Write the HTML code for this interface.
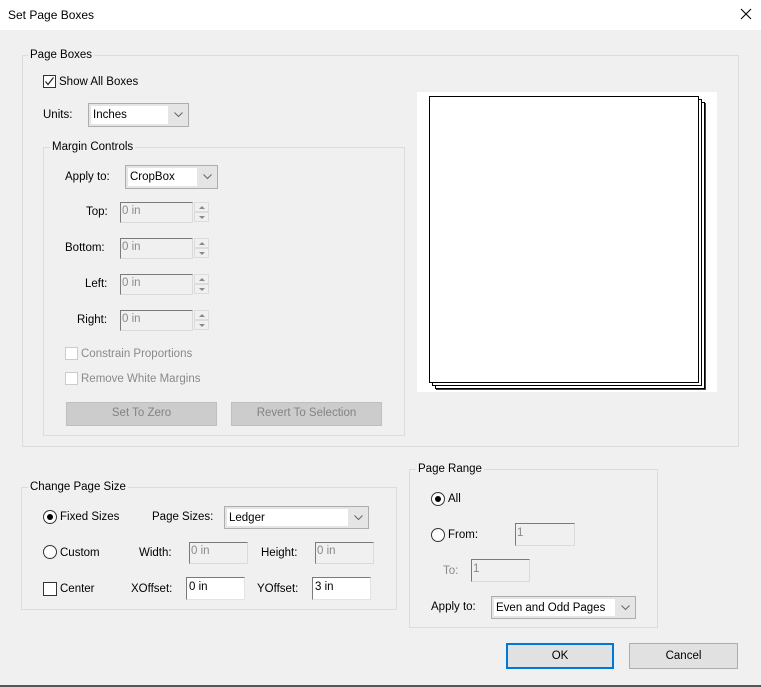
<!DOCTYPE html>
<html><head><meta charset="utf-8"><style>
*{box-sizing:border-box;margin:0;padding:0}
body{width:761px;height:687px;background:#f0f0f0;font-family:"Liberation Sans",sans-serif;font-size:11.5px;color:#000;position:relative;overflow:hidden}
.a{position:absolute}
.t{position:absolute;line-height:14px;white-space:nowrap}
.g{position:absolute;border:1px solid #dcdcdc}
.lg{position:absolute;background:#f0f0f0;padding:0 2px;line-height:14px;white-space:nowrap}
.sel{position:absolute;border:1px solid #adadad;background:#e5e5e5}
.sel .in{position:absolute;left:2px;top:2px;bottom:2px;right:20px;background:#fff;padding-left:2px;line-height:18px}
.sel svg{position:absolute;right:5px;top:8px}
.inp{position:absolute;border:1px solid #dadada;border-top-color:#7a7a7a;border-left-color:#7a7a7a;background:#f0f0f0;color:#8a8a8a;padding-left:1px;line-height:17px}
.inpw{position:absolute;border:1px solid #7a7a7a;border-right-color:#e3e3e3;border-bottom-color:#e3e3e3;background:#fff;padding-left:2px;line-height:19px}
.sp{position:absolute;width:15px;height:10px;border:1px solid #dcdcdc;background:#f0f0f0}
.sp:after{content:"";position:absolute;left:4px;top:3px;border-left:3px solid transparent;border-right:3px solid transparent}
.up:after{border-bottom:3px solid #8a8a8a}
.dn:after{border-top:3px solid #8a8a8a}
.cb{position:absolute;width:13px;height:13px;border:1px solid #333;background:#fff}
.cbd{border-color:#ccc}
.rd{position:absolute;width:14px;height:14px;border:1px solid #333;border-radius:50%;background:#fff}
.rd.on:after{content:"";position:absolute;left:3px;top:3px;width:6px;height:6px;border-radius:50%;background:#000}
.btn{position:absolute;background:#cccccc;border:1px solid #bfbfbf;color:#838383;text-align:center;line-height:21px}
.dis{color:#8a8a8a}
</style></head><body>
<div class="a" style="left:0;top:0;width:761px;height:30px;background:#fff"></div>
<div class="t" style="left:8px;top:8px;font-size:12px">Set Page Boxes</div>
<svg class="a" style="left:740px;top:8px" width="12" height="12"><path d="M1 1L11 11M11 1L1 11" stroke="#000" stroke-width="1.1"/></svg>

<div class="g" style="left:22px;top:55px;width:717px;height:392px"></div>
<div class="lg" style="left:28px;top:48px">Page Boxes</div>
<div class="cb" style="left:43px;top:75px"></div>
<svg class="a" style="left:44px;top:76px" width="11" height="11"><path d="M1.5 5.5L4 8.5L9.5 1.5" stroke="#222" stroke-width="1.2" fill="none"/></svg>
<div class="t" style="left:59px;top:75px">Show All Boxes</div>
<div class="t" style="left:43px;top:108px">Units:</div>
<div class="sel" style="left:88px;top:103px;width:101px;height:24px"><div class="in">Inches</div><svg width="9" height="6"><path d="M.5 .5L4.5 4.5L8.5 .5" stroke="#666" fill="none"/></svg></div>

<div class="a" style="left:417px;top:92px;width:300px;height:300px;background:#fff"></div>
<div class="a" style="left:435px;top:102px;width:270px;height:287px;border:1px solid #000;background:#fff;box-shadow:1px 1px 0 #444"></div>
<div class="a" style="left:432px;top:99px;width:270px;height:287px;border:1px solid #000;background:#fff"></div>
<div class="a" style="left:429px;top:96px;width:270px;height:287px;border:1px solid #000;background:#fff"></div>

<div class="g" style="left:43px;top:147px;width:362px;height:289px"></div>
<div class="lg" style="left:50px;top:140px">Margin Controls</div>
<div class="t" style="left:65px;top:170px">Apply to:</div>
<div class="sel" style="left:125px;top:165px;width:93px;height:24px"><div class="in">CropBox</div><svg width="9" height="6"><path d="M.5 .5L4.5 4.5L8.5 .5" stroke="#666" fill="none"/></svg></div>

<div class="t" style="left:86px;top:205px">Top:</div>
<div class="inp" style="left:120px;top:202px;width:73px;height:21px">0 in</div>
<div class="sp up" style="left:194px;top:202px"></div><div class="sp dn" style="left:194px;top:212px"></div>
<div class="t" style="left:65px;top:241px">Bottom:</div>
<div class="inp" style="left:120px;top:238px;width:73px;height:21px">0 in</div>
<div class="sp up" style="left:194px;top:238px"></div><div class="sp dn" style="left:194px;top:248px"></div>
<div class="t" style="left:85px;top:277px">Left:</div>
<div class="inp" style="left:120px;top:274px;width:73px;height:21px">0 in</div>
<div class="sp up" style="left:194px;top:274px"></div><div class="sp dn" style="left:194px;top:284px"></div>
<div class="t" style="left:77px;top:313px">Right:</div>
<div class="inp" style="left:120px;top:310px;width:73px;height:21px">0 in</div>
<div class="sp up" style="left:194px;top:310px"></div><div class="sp dn" style="left:194px;top:320px"></div>

<div class="cb cbd" style="left:65px;top:347px"></div>
<div class="t dis" style="left:81px;top:347px">Constrain Proportions</div>
<div class="cb cbd" style="left:65px;top:372px"></div>
<div class="t dis" style="left:81px;top:372px">Remove White Margins</div>
<div class="btn" style="left:66px;top:402px;width:151px;height:24px">Set To Zero</div>
<div class="btn" style="left:231px;top:402px;width:151px;height:24px">Revert To Selection</div>

<div class="g" style="left:21px;top:487px;width:376px;height:123px"></div>
<div class="lg" style="left:28px;top:480px">Change Page Size</div>
<div class="rd on" style="left:43px;top:510px"></div>
<div class="t" style="left:60px;top:510px">Fixed Sizes</div>
<div class="t" style="left:152px;top:510px">Page Sizes:</div>
<div class="sel" style="left:224px;top:506px;width:145px;height:23px"><div class="in">Ledger</div><svg width="9" height="6"><path d="M.5 .5L4.5 4.5L8.5 .5" stroke="#666" fill="none"/></svg></div>
<div class="rd" style="left:43px;top:545px"></div>
<div class="t" style="left:60px;top:546px">Custom</div>
<div class="t" style="left:139px;top:546px">Width:</div>
<div class="inp" style="left:189px;top:542px;width:59px;height:22px">0 in</div>
<div class="t" style="left:261px;top:546px">Height:</div>
<div class="inp" style="left:315px;top:542px;width:59px;height:22px">0 in</div>
<div class="cb" style="left:43px;top:582px;width:14px;height:14px"></div>
<div class="t" style="left:60px;top:582px">Center</div>
<div class="t" style="left:131px;top:582px">XOffset:</div>
<div class="inpw" style="left:186px;top:577px;width:59px;height:23px">0 in</div>
<div class="t" style="left:257px;top:582px">YOffset:</div>
<div class="inpw" style="left:312px;top:577px;width:59px;height:23px">3 in</div>

<div class="g" style="left:409px;top:469px;width:249px;height:159px"></div>
<div class="lg" style="left:416px;top:462px">Page Range</div>
<div class="rd on" style="left:431px;top:492px"></div>
<div class="t" style="left:448px;top:492px">All</div>
<div class="rd" style="left:431px;top:528px"></div>
<div class="t" style="left:448px;top:528px">From:</div>
<div class="inp" style="left:515px;top:523px;width:60px;height:23px;line-height:19px">1</div>
<div class="t dis" style="left:443px;top:564px">To:</div>
<div class="inp" style="left:471px;top:559px;width:59px;height:23px;line-height:19px">1</div>
<div class="t" style="left:431px;top:600px">Apply to:</div>
<div class="sel" style="left:491px;top:596px;width:145px;height:23px"><div class="in">Even and Odd Pages</div><svg width="9" height="6"><path d="M.5 .5L4.5 4.5L8.5 .5" stroke="#666" fill="none"/></svg></div>

<div class="a" style="left:506px;top:643px;width:108px;height:26px;border:2px solid #0078d7;background:#e1e1e1;text-align:center;line-height:22px">OK</div>
<div class="a" style="left:629px;top:643px;width:109px;height:26px;border:1px solid #adadad;background:#e1e1e1;text-align:center;line-height:24px">Cancel</div>
<div class="a" style="left:0;top:685px;width:761px;height:2px;background:#555"></div>
</body></html>
